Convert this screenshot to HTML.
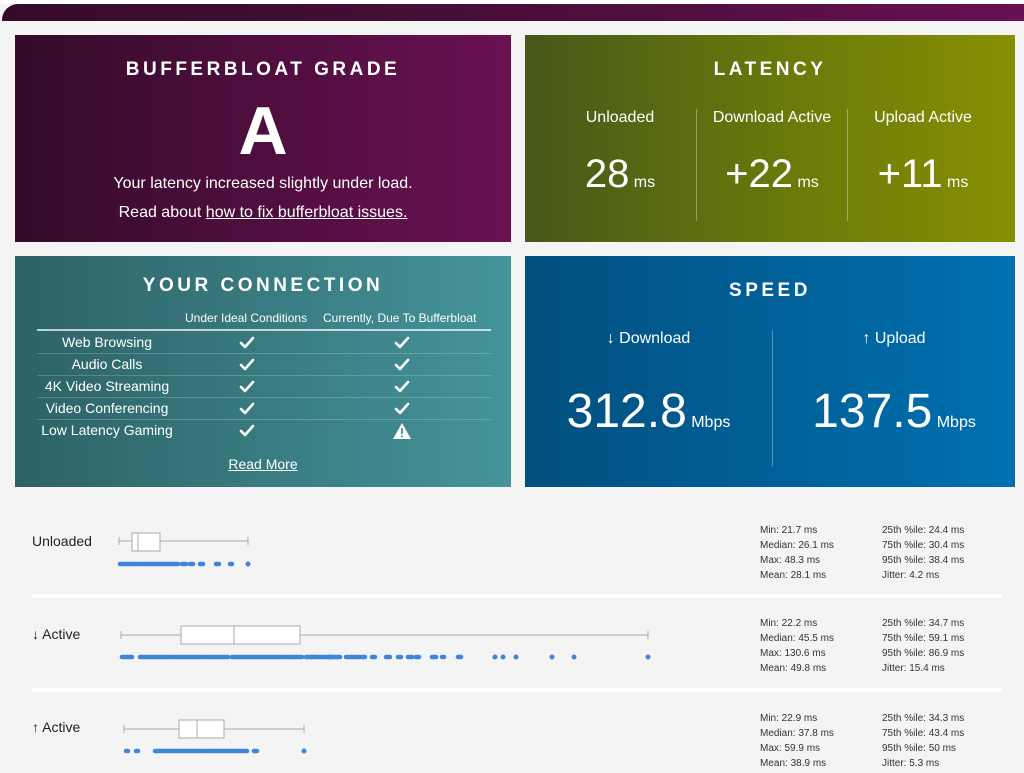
<!DOCTYPE html>
<html><head><meta charset="utf-8"><style>
*{margin:0;padding:0;box-sizing:border-box}
body{width:1024px;height:773px;background:#f4f4f4;font-family:"Liberation Sans",sans-serif;position:relative;overflow:hidden;color:#fff}
.a{position:absolute}
.p{position:absolute}
.t{position:absolute;left:0;right:0;text-align:center;font-weight:bold;letter-spacing:3.5px;font-size:19px}
.c{position:absolute;text-align:center}
.st{position:absolute;color:#333;font-size:10px;line-height:15px}
</style></head><body>
<div class="a" style="left:0;top:0;width:1024px;height:4px;background:#fff"></div>
<div class="a" style="left:2px;top:4px;width:1022px;height:17px;background:linear-gradient(90deg,#360b2a,#4c0f3b 60%,#6a0f55);border-radius:16px 0 0 0"></div>

<div class="p" style="left:15px;top:35px;width:496px;height:207px;background:linear-gradient(90deg,#340b29,#6a1153)">
<div class="t" style="top:24px">BUFFERBLOAT GRADE</div>
<div class="c" style="left:0;right:0;top:60px;font-size:68px;font-weight:bold;line-height:72px">A</div>
<div class="c" style="left:0;right:0;top:140px;font-size:16px">Your latency increased slightly under load.</div>
<div class="c" style="left:0;right:0;top:169px;font-size:16px">Read about <u>how to fix bufferbloat issues.</u></div>
</div>

<div class="p" style="left:525px;top:35px;width:490px;height:207px;background:linear-gradient(90deg,#46581a,#6b7a0a 55%,#878f02)">
<div class="t" style="top:24px">LATENCY</div>
<div class="a" style="left:171px;top:74px;width:1px;height:112px;background:rgba(255,255,255,.35)"></div>
<div class="a" style="left:322px;top:74px;width:1px;height:112px;background:rgba(255,255,255,.35)"></div>
<div class="c" style="left:20px;width:150px;top:74px;font-size:16px">Unloaded</div>
<div class="c" style="left:172px;width:150px;top:74px;font-size:16px">Download Active</div>
<div class="c" style="left:323px;width:150px;top:74px;font-size:16px">Upload Active</div>
<div class="c" style="left:20px;width:150px;top:117px;font-size:40px">28<span style="font-size:16px"> ms</span></div>
<div class="c" style="left:172px;width:150px;top:117px;font-size:40px">+22<span style="font-size:16px"> ms</span></div>
<div class="c" style="left:323px;width:150px;top:117px;font-size:40px">+11<span style="font-size:16px"> ms</span></div>
</div>

<div class="p" style="left:15px;top:256px;width:496px;height:231px;background:linear-gradient(90deg,#2d6266,#44949a)">
<div class="t" style="top:19px">YOUR CONNECTION</div>
<div class="a" style="left:170px;top:55px;font-size:12px">Under Ideal Conditions</div>
<div class="a" style="left:308px;top:55px;font-size:12px">Currently, Due To Bufferbloat</div>
<div class="a" style="left:22px;top:73px;width:454px;height:2px;background:rgba(255,255,255,.7)"></div>
<div class="a" style="left:22px;top:97px;width:454px;height:1px;background:rgba(255,255,255,.2)"></div>
<div class="a" style="left:22px;top:119px;width:454px;height:1px;background:rgba(255,255,255,.2)"></div>
<div class="a" style="left:22px;top:141px;width:454px;height:1px;background:rgba(255,255,255,.2)"></div>
<div class="a" style="left:22px;top:163px;width:454px;height:1px;background:rgba(255,255,255,.2)"></div>
<div class="c" style="left:12px;width:160px;top:78px;font-size:14px">Web Browsing</div>
<div class="c" style="left:12px;width:160px;top:100px;font-size:14px">Audio Calls</div>
<div class="c" style="left:12px;width:160px;top:122px;font-size:14px">4K Video Streaming</div>
<div class="c" style="left:12px;width:160px;top:144px;font-size:14px">Video Conferencing</div>
<div class="c" style="left:12px;width:160px;top:166px;font-size:14px">Low Latency Gaming</div>
<svg class="a" style="left:0;top:0" width="496" height="231">
<g fill="none" stroke="#fff" stroke-width="2.6" stroke-linecap="round" stroke-linejoin="round">
<path d="M226 87l4 4 8-9M381 87l4 4 8-9M226 109l4 4 8-9M381 109l4 4 8-9M226 131l4 4 8-9M381 131l4 4 8-9M226 153l4 4 8-9M381 153l4 4 8-9M226 175l4 4 8-9"/></g>
<path d="M387 167l9 16h-18z" fill="#fff"/><rect x="386.2" y="172" width="1.6" height="6" fill="#3b8389"/><rect x="386.2" y="179.5" width="1.6" height="1.6" fill="#3b8389"/>
</svg>
<div class="c" style="left:0;right:0;top:200px;font-size:14px"><u>Read More</u></div>
</div>

<div class="p" style="left:525px;top:256px;width:490px;height:231px;background:linear-gradient(90deg,#024f7e,#0070b1)">
<div class="t" style="top:24px">SPEED</div>
<div class="a" style="left:247px;top:74px;width:1px;height:136px;background:rgba(255,255,255,.35)"></div>
<div class="c" style="left:0;width:247px;top:74px;font-size:16px">↓ Download</div>
<div class="c" style="left:248px;width:242px;top:74px;font-size:16px">↑ Upload</div>
<div class="c" style="left:0;width:247px;top:128px;font-size:48px">312.8<span style="font-size:16px"> Mbps</span></div>
<div class="c" style="left:248px;width:242px;top:128px;font-size:48px">137.5<span style="font-size:16px"> Mbps</span></div>
</div>

<div class="a" style="left:32px;top:594px;width:970px;height:4px;background:#fff"></div>
<div class="a" style="left:32px;top:688px;width:970px;height:4px;background:#fff"></div>
<div class="a" style="left:32px;top:533px;color:#222;font-size:14px">Unloaded</div>
<div class="a" style="left:32px;top:626px;color:#222;font-size:14px">↓ Active</div>
<div class="a" style="left:32px;top:719px;color:#222;font-size:14px">↑ Active</div>

<svg class="a" style="left:0;top:0" width="1024" height="773">
<g stroke="#aaa" stroke-width="1" fill="#fff">
<path d="M119 541h13M160 541h88M119 537v8M248 537v8"/><rect x="132" y="533" width="28" height="18"/><path d="M138 533v18"/>
<path d="M121 635h60M300 635h348M121 631v8M648 631v8"/><rect x="181" y="626" width="119" height="18"/><path d="M234 626v18"/>
<path d="M124 729h55M224 729h80M124 725v8M304 725v8"/><rect x="179" y="720" width="45" height="18"/><path d="M197 720v18"/>
</g>
<g stroke="#3f86d9" stroke-width="4.5" stroke-linecap="round">
<path d="M120 564h18M140 564h38M182 564h4M190 564h3M200 564h3M216 564h3M230 564h2"/>
<path d="M122 657h10M140 657h28M170 657h30M202 657h26M232 657h50M284 657h18M306 657h34M346 657h14M362 657h3M372 657h3M386 657h4M398 657h3M408 657h4M416 657h3M432 657h4M442 657h2M458 657h3"/>
<path d="M126 751h2M136 751h2M155 751h48M205 751h35M242 751h5M254 751h3"/>
</g>
<g fill="#3f86d9">
<circle cx="248" cy="564" r="2.5"/>
<circle cx="495" cy="657" r="2.5"/><circle cx="503" cy="657" r="2.5"/><circle cx="516" cy="657" r="2.5"/><circle cx="552" cy="657" r="2.5"/><circle cx="574" cy="657" r="2.5"/><circle cx="648" cy="657" r="2.5"/><circle cx="312" cy="657" r="2.5"/><circle cx="330" cy="657" r="2.5"/>
<circle cx="304" cy="751" r="2.5"/>
</g>
</svg>

<div class="st" style="left:760px;top:523px">Min: 21.7 ms<br>Median: 26.1 ms<br>Max: 48.3 ms<br>Mean: 28.1 ms</div>
<div class="st" style="left:882px;top:523px">25th %ile: 24.4 ms<br>75th %ile: 30.4 ms<br>95th %ile: 38.4 ms<br>Jitter: 4.2 ms</div>
<div class="st" style="left:760px;top:616px">Min: 22.2 ms<br>Median: 45.5 ms<br>Max: 130.6 ms<br>Mean: 49.8 ms</div>
<div class="st" style="left:882px;top:616px">25th %ile: 34.7 ms<br>75th %ile: 59.1 ms<br>95th %ile: 86.9 ms<br>Jitter: 15.4 ms</div>
<div class="st" style="left:760px;top:711px">Min: 22.9 ms<br>Median: 37.8 ms<br>Max: 59.9 ms<br>Mean: 38.9 ms</div>
<div class="st" style="left:882px;top:711px">25th %ile: 34.3 ms<br>75th %ile: 43.4 ms<br>95th %ile: 50 ms<br>Jitter: 5.3 ms</div>
</body></html>
